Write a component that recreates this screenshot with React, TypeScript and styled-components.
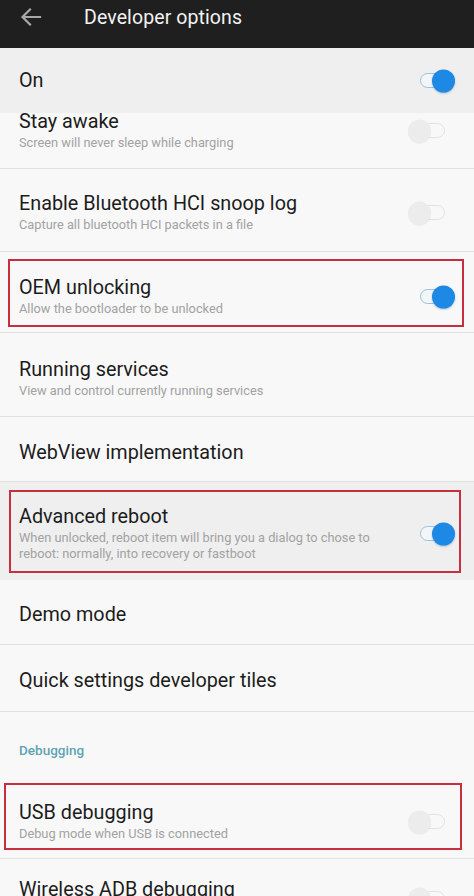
import React from "react";
import styled, { createGlobalStyle } from "styled-components";

const GlobalStyle = createGlobalStyle`
  html, body {
    margin: 0;
    padding: 0;
    background: #f8f8f8;
    font-family: Roboto, "Noto Sans", "Liberation Sans", sans-serif;
    -webkit-font-smoothing: antialiased;
  }
  body {
    width: 474px;
    height: 896px;
    overflow: hidden;
  }
`;

type Pref = {
  title: string;
  summary?: string;
  toggle?: "on" | "off";
  highlight?: { top: number; bottom: number; left: number; right: number };
  shaded?: boolean;
  tucked?: boolean;
  pad: [number, number];
};

const Screen = styled.div`
  display: flex;
  flex-direction: column;
  width: 474px;
  background: #f8f8f8;
`;

const Toolbar = styled.header`
  display: flex;
  align-items: center;
  height: 48px;
  padding: 0 0 14px 20px;
  box-sizing: border-box;
  background: #1f1f1f;
`;

const BackButton = styled.div`
  display: flex;
  width: 24px;
  height: 20px;
  margin-right: 40px;
`;

const ToolbarTitle = styled.h1`
  margin: 0;
  font-size: 19.5px;
  font-weight: 400;
  color: #f2f2f2;
  letter-spacing: 0.1px;
`;

const MasterBar = styled.div`
  display: flex;
  align-items: center;
  justify-content: space-between;
  height: 65px;
  padding: 0 19px;
  background: #efefef;
  position: relative;
  z-index: 1;
`;

const MasterLabel = styled.span`
  font-size: 19.8px;
  color: #1c1c1c;
`;

const Row = styled.div<{
  $shaded?: boolean;
  $tucked?: boolean;
  $top: number;
  $bottom: number;
}>`
  position: relative;
  display: flex;
  align-items: center;
  margin-top: ${(p) => (p.$tucked ? -4 : 0)}px;
  padding: ${(p) => p.$top}px 19px ${(p) => p.$bottom}px 19px;
  background: ${(p) => (p.$shaded ? "#efefef" : "#f8f8f8")};
  border-bottom: 1px solid ${(p) => (p.$shaded ? "#efefef" : "#e1e1e1")};
`;

const TextBlock = styled.div`
  flex: 1;
  display: flex;
  flex-direction: column;
`;

const Title = styled.div`
  font-size: 19.8px;
  line-height: 24px;
  color: #1c1c1c;
`;

const Summary = styled.div`
  font-size: 12.8px;
  line-height: 16px;
  color: #a2a2a2;
  padding-right: 40px;
  margin-top: 1px;
`;

const Highlight = styled.div<{ $t: number; $b: number; $l: number; $r: number }>`
  position: absolute;
  top: ${(p) => p.$t}px;
  bottom: ${(p) => p.$b}px;
  left: ${(p) => p.$l}px;
  right: ${(p) => p.$r}px;
  border: 2px solid #c82f3e;
  pointer-events: none;
`;

const SwitchTrack = styled.div<{ $on: boolean }>`
  position: relative;
  flex: none;
  width: 30px;
  height: 13px;
  border-radius: 8px;
  border: 1.5px solid ${(p) => (p.$on ? "#9fc0dc" : "#e2e2e2")};
  background: ${(p) => (p.$on ? "#f3f6f9" : "#f8f8f8")};
  margin-right: ${(p) => (p.$on ? 3 : 10)}px;
`;

const SwitchThumb = styled.div<{ $on: boolean }>`
  position: absolute;
  top: 50%;
  width: 23px;
  height: 23px;
  border-radius: 50%;
  transform: translateY(-50%);
  ${(p) => (p.$on ? "right: -4px;" : "left: -6px;")}
  background: ${(p) => (p.$on ? "#1e88e5" : "#ececec")};
  box-shadow: ${(p) =>
    p.$on ? "0 1px 2px rgba(30, 100, 170, 0.35)" : "0 1px 1px rgba(0,0,0,0.06)"};
`;

const Category = styled.div`
  padding: 29px 19px 24px;
  font-size: 13.5px;
  line-height: 18px;
  color: #5ea3b3;
  font-weight: 500;
`;

const Switch: React.FC<{ on: boolean }> = ({ on }) => (
  <SwitchTrack $on={on}>
    <SwitchThumb $on={on} />
  </SwitchTrack>
);

const BackArrow = () => (
  <svg width="22" height="20" viewBox="0 0 22 20" fill="none">
    <path
      d="M20 10H3M10 2.5L2.5 10L10 17.5"
      stroke="#a8a8a8"
      strokeWidth="2.2"
      strokeLinecap="square"
    />
  </svg>
);

const prefsTop: Pref[] = [
  {
    title: "Stay awake",
    summary: "Screen will never sleep while charging",
    toggle: "off",
    tucked: true,
    pad: [1, 17],
  },
  {
    title: "Enable Bluetooth HCI snoop log",
    summary: "Capture all bluetooth HCI packets in a file",
    toggle: "off",
    pad: [23, 18],
  },
  {
    title: "OEM unlocking",
    summary: "Allow the bootloader to be unlocked",
    toggle: "on",
    highlight: { top: 7, bottom: 5, left: 8, right: 10 },
    pad: [24, 15],
  },
  {
    title: "Running services",
    summary: "View and control currently running services",
    pad: [25, 17],
  },
  { title: "WebView implementation", pad: [24, 16] },
  {
    title: "Advanced reboot",
    summary:
      "When unlocked, reboot item will bring you a dialog to chose to reboot: normally, into recovery or fastboot",
    toggle: "on",
    shaded: true,
    highlight: { top: 8, bottom: 6, left: 9, right: 13 },
    pad: [23, 17],
  },
  { title: "Demo mode", pad: [23, 17] },
  { title: "Quick settings developer tiles", pad: [24, 18] },
];

const prefsBottom: Pref[] = [
  {
    title: "USB debugging",
    summary: "Debug mode when USB is connected",
    toggle: "off",
    highlight: { top: 0, bottom: 8, left: 4, right: 12 },
    pad: [18, 16],
  },
  {
    title: "Wireless ADB debugging",
    summary: "Debug mode when Wi-Fi is connected",
    toggle: "off",
    pad: [19, 19],
  },
];

const PrefRow: React.FC<{ pref: Pref }> = ({ pref }) => (
  <Row
    $shaded={pref.shaded}
    $tucked={pref.tucked}
    $top={pref.pad[0]}
    $bottom={pref.pad[1]}
  >
    <TextBlock>
      <Title>{pref.title}</Title>
      {pref.summary && <Summary>{pref.summary}</Summary>}
    </TextBlock>
    {pref.toggle && <Switch on={pref.toggle === "on"} />}
    {pref.highlight && (
      <Highlight
        $t={pref.highlight.top}
        $b={pref.highlight.bottom}
        $l={pref.highlight.left}
        $r={pref.highlight.right}
      />
    )}
  </Row>
);

export default function App() {
  return (
    <Screen>
      <GlobalStyle />
      <Toolbar>
        <BackButton>
          <BackArrow />
        </BackButton>
        <ToolbarTitle>Developer options</ToolbarTitle>
      </Toolbar>
      <MasterBar>
        <MasterLabel>On</MasterLabel>
        <Switch on />
      </MasterBar>
      {prefsTop.map((p) => (
        <PrefRow key={p.title} pref={p} />
      ))}
      <Category>Debugging</Category>
      {prefsBottom.map((p) => (
        <PrefRow key={p.title} pref={p} />
      ))}
    </Screen>
  );
}
